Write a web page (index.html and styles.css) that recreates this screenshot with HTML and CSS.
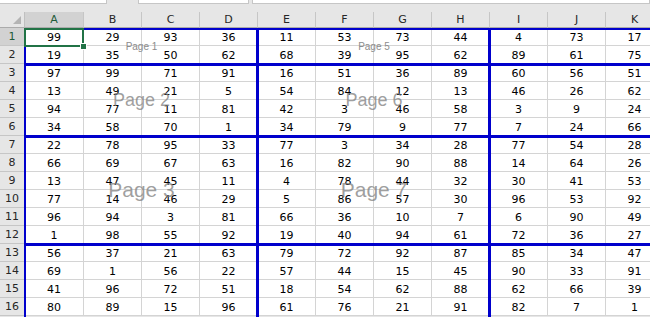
FILE: index.html
```html
<!DOCTYPE html>
<html>
<head>
<meta charset="utf-8">
<link rel="stylesheet" href="styles.css">
</head>
<body>
<div class="app">
  <div class="topbar">
    <div class="box namebox"></div>
    <div class="box fxbtn"></div>
    <div class="box fx"></div>
  </div>
  <div class="sheet">
    <div class="grid">
      <div class="corner"><span class="tri"></span></div>
      <div class="ch sel">A</div><div class="ch">B</div><div class="ch">C</div><div class="ch">D</div><div class="ch">E</div><div class="ch">F</div><div class="ch">G</div><div class="ch">H</div><div class="ch">I</div><div class="ch">J</div><div class="ch">K</div>

      <div class="rh sel">1</div><div class="c">99</div><div class="c">29</div><div class="c">93</div><div class="c">36</div><div class="c">11</div><div class="c">53</div><div class="c">73</div><div class="c">44</div><div class="c">4</div><div class="c">73</div><div class="c">17</div>
      <div class="rh">2</div><div class="c">19</div><div class="c">35</div><div class="c">50</div><div class="c">62</div><div class="c">68</div><div class="c">39</div><div class="c">95</div><div class="c">62</div><div class="c">89</div><div class="c">61</div><div class="c">75</div>
      <div class="rh">3</div><div class="c">97</div><div class="c">99</div><div class="c">71</div><div class="c">91</div><div class="c">16</div><div class="c">51</div><div class="c">36</div><div class="c">89</div><div class="c">60</div><div class="c">56</div><div class="c">51</div>
      <div class="rh">4</div><div class="c">13</div><div class="c">49</div><div class="c">21</div><div class="c">5</div><div class="c">54</div><div class="c">84</div><div class="c">12</div><div class="c">13</div><div class="c">46</div><div class="c">26</div><div class="c">62</div>
      <div class="rh">5</div><div class="c">94</div><div class="c">77</div><div class="c">11</div><div class="c">81</div><div class="c">42</div><div class="c">3</div><div class="c">46</div><div class="c">58</div><div class="c">3</div><div class="c">9</div><div class="c">24</div>
      <div class="rh">6</div><div class="c">34</div><div class="c">58</div><div class="c">70</div><div class="c">1</div><div class="c">34</div><div class="c">79</div><div class="c">9</div><div class="c">77</div><div class="c">7</div><div class="c">24</div><div class="c">66</div>
      <div class="rh">7</div><div class="c">22</div><div class="c">78</div><div class="c">95</div><div class="c">33</div><div class="c">77</div><div class="c">3</div><div class="c">34</div><div class="c">28</div><div class="c">77</div><div class="c">54</div><div class="c">28</div>
      <div class="rh">8</div><div class="c">66</div><div class="c">69</div><div class="c">67</div><div class="c">63</div><div class="c">16</div><div class="c">82</div><div class="c">90</div><div class="c">88</div><div class="c">14</div><div class="c">64</div><div class="c">26</div>
      <div class="rh">9</div><div class="c">13</div><div class="c">47</div><div class="c">45</div><div class="c">11</div><div class="c">4</div><div class="c">78</div><div class="c">44</div><div class="c">32</div><div class="c">30</div><div class="c">41</div><div class="c">53</div>
      <div class="rh">10</div><div class="c">77</div><div class="c">14</div><div class="c">46</div><div class="c">29</div><div class="c">5</div><div class="c">86</div><div class="c">57</div><div class="c">30</div><div class="c">96</div><div class="c">53</div><div class="c">92</div>
      <div class="rh">11</div><div class="c">96</div><div class="c">94</div><div class="c">3</div><div class="c">81</div><div class="c">66</div><div class="c">36</div><div class="c">10</div><div class="c">7</div><div class="c">6</div><div class="c">90</div><div class="c">49</div>
      <div class="rh">12</div><div class="c">1</div><div class="c">98</div><div class="c">55</div><div class="c">92</div><div class="c">19</div><div class="c">40</div><div class="c">94</div><div class="c">61</div><div class="c">72</div><div class="c">36</div><div class="c">27</div>
      <div class="rh">13</div><div class="c">56</div><div class="c">37</div><div class="c">21</div><div class="c">63</div><div class="c">79</div><div class="c">72</div><div class="c">92</div><div class="c">87</div><div class="c">85</div><div class="c">34</div><div class="c">47</div>
      <div class="rh">14</div><div class="c">69</div><div class="c">1</div><div class="c">56</div><div class="c">22</div><div class="c">57</div><div class="c">44</div><div class="c">15</div><div class="c">45</div><div class="c">90</div><div class="c">33</div><div class="c">91</div>
      <div class="rh">15</div><div class="c">41</div><div class="c">96</div><div class="c">72</div><div class="c">51</div><div class="c">18</div><div class="c">54</div><div class="c">62</div><div class="c">88</div><div class="c">62</div><div class="c">66</div><div class="c">39</div>
      <div class="rh">16</div><div class="c">80</div><div class="c">89</div><div class="c">15</div><div class="c">96</div><div class="c">61</div><div class="c">76</div><div class="c">21</div><div class="c">91</div><div class="c">82</div><div class="c">7</div><div class="c">1</div>
    </div>

    <div class="wm wm-p1"><span class="wm-s">Page 1</span></div>
    <div class="wm wm-p5"><span class="wm-s">Page 5</span></div>
    <div class="wm wm-p2"><span class="wm-m">Page 2</span></div>
    <div class="wm wm-p6"><span class="wm-m">Page 6</span></div>
    <div class="wm wm-p3"><span class="wm-l">Page 3</span></div>
    <div class="wm wm-p7"><span class="wm-l">Page 7</span></div>

    <div class="pb pb-left"></div>
    <div class="pb pb-top"></div>
    <div class="pb pb-v pb-v1"></div>
    <div class="pb pb-v pb-v2"></div>
    <div class="pb pb-h pb-h1"></div>
    <div class="pb pb-h pb-h2"></div>
    <div class="pb pb-h pb-h3"></div>

    <div class="selbox"><span class="handle"></span></div>
  </div>
</div>
</body>
</html>
```

FILE: styles.css
```css
html, body {
  margin: 0;
  padding: 0;
  background: #ffffff;
}

.app {
  width: 650px;
  height: 317px;
  overflow: hidden;
  background: #e6e6e6;
  font-family: "DejaVu Sans", "Liberation Sans", sans-serif;
}

.topbar {
  height: 12px;
  display: flex;
  align-items: flex-start;
  gap: 0;
}

.box {
  height: 3px;
  background: #ffffff;
  border-bottom: 1px solid #c6c6c6;
  border-right: 1px solid #c6c6c6;
}

.namebox { width: 106px; }
.fxbtn { width: 109px; margin-left: 31px; border-left: 1px solid #c6c6c6; }
.fx { flex: 1; margin-left: 3px; border-left: 1px solid #c6c6c6; }

.sheet {
  position: relative;
  height: 305px;
  overflow: hidden;
}

.grid {
  display: grid;
  grid-template-columns: 25px 59px repeat(10, 58px);
  grid-template-rows: 16px repeat(16, 18px);
  width: 664px;
  background: #ffffff;
}

.corner {
  position: relative;
  background: #e6e6e6;
  border-right: 1px solid #c0c0c0;
  border-bottom: 1px solid #ababab;
  box-sizing: border-box;
}

.tri {
  position: absolute;
  right: 3px;
  bottom: 3px;
  width: 0;
  height: 0;
  border-left: 8px solid transparent;
  border-bottom: 8px solid #b4b4b4;
}

.ch {
  background: #e6e6e6;
  border-right: 1px solid #c6c6c6;
  border-bottom: 1px solid #ababab;
  box-sizing: border-box;
  display: flex;
  align-items: center;
  justify-content: center;
  font-size: 11px;
  color: #262626;
}

.rh {
  background: #e6e6e6;
  border-right: 1px solid #ababab;
  border-bottom: 1px solid #c6c6c6;
  box-sizing: border-box;
  display: flex;
  align-items: center;
  justify-content: center;
  font-size: 11px;
  color: #262626;
}

.ch.sel, .rh.sel {
  background: #d2d2d2;
  color: #1e5c38;
}

.c {
  border-right: 1px solid #d4d4d4;
  border-bottom: 1px solid #d4d4d4;
  box-sizing: border-box;
  display: flex;
  align-items: center;
  justify-content: center;
  font-size: 11px;
  color: #000000;
  padding-top: 1px;
}

/* page watermarks */
.wm {
  position: absolute;
  display: flex;
  align-items: center;
  justify-content: center;
  color: #9a9a9a;
  font-family: "Liberation Sans", Arial, sans-serif;
  pointer-events: none;
}
.wm-p1 { left: 25px; top: 16px; width: 233px; height: 36px; }
.wm-p5 { left: 258px; top: 16px; width: 232px; height: 36px; }
.wm-p2 { left: 25px; top: 52px; width: 233px; height: 72px; }
.wm-p6 { left: 258px; top: 52px; width: 232px; height: 72px; }
.wm-p3 { left: 25px; top: 124px; width: 233px; height: 108px; }
.wm-p7 { left: 258px; top: 124px; width: 232px; height: 108px; }

.wm-s { font-size: 10px; color: #8c8c8c; }
.wm-m { font-size: 18px; color: rgba(128,128,128,0.75); }
.wm-l { font-size: 21px; color: rgba(128,128,128,0.75); }

/* page break lines */
.pb {
  position: absolute;
  background: #0000cc;
}
.pb-left { left: 24px; top: 16px; width: 2px; height: 290px; }
.pb-top { left: 24px; top: 16px; width: 640px; height: 2px; }
.pb-v { top: 16px; width: 3px; height: 290px; }
.pb-v1 { left: 256px; }
.pb-v2 { left: 488px; }
.pb-h { left: 24px; width: 640px; height: 3px; }
.pb-h1 { top: 51px; }
.pb-h2 { top: 123px; }
.pb-h3 { top: 231px; }

/* selection */
.selbox {
  position: absolute;
  left: 24px;
  top: 16px;
  width: 56px;
  height: 15px;
  border: 2px solid #217346;
}
.handle {
  position: absolute;
  right: -5px;
  bottom: -5px;
  width: 5px;
  height: 5px;
  background: #217346;
  border: 1px solid #ffffff;
}
```
